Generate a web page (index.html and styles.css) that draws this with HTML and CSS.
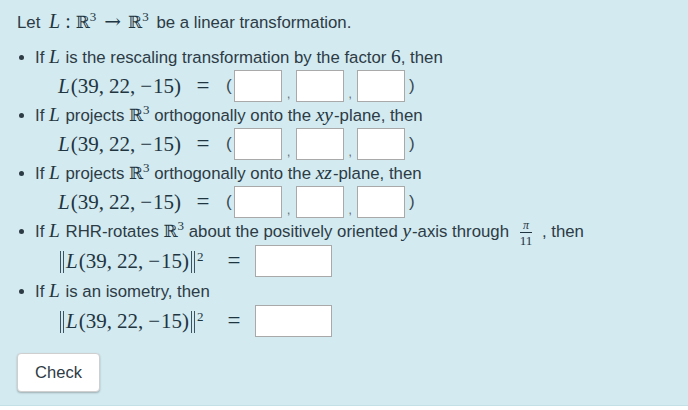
FILE: index.html
```html
<!DOCTYPE html>
<html>
<head>
<meta charset="utf-8">
<link rel="stylesheet" href="styles.css">
</head>
<body>
<div class="panel">
  <p class="intro">Let <span class="m imath"><i>L</i><span class="colon">:</span><span class="bb">ℝ</span><sup>3</sup><span class="arrow">→</span><span class="bb">ℝ</span><sup>3</sup></span> be a linear transformation.</p>
  <ul class="items">
    <li class="item">
      <div class="txt">If <i class="m">L</i> is the rescaling transformation by the factor <span class="m">6</span>, then</div>
      <div class="mrow">
        <span class="m expr"><i>L</i>(39,<span class="sp"></span>22,<span class="sp"></span><span class="minus">−</span>15)</span>
        <span class="m eq">=</span>
        <span class="paren">(</span><span class="box"></span><span class="comma">,</span><span class="box"></span><span class="comma">,</span><span class="box"></span><span class="paren close">)</span>
      </div>
    </li>
    <li class="item">
      <div class="txt">If <i class="m">L</i> projects <span class="m"><span class="bb">ℝ</span><sup>3</sup></span> orthogonally onto the <i class="m">xy</i>-plane, then</div>
      <div class="mrow">
        <span class="m expr"><i>L</i>(39,<span class="sp"></span>22,<span class="sp"></span><span class="minus">−</span>15)</span>
        <span class="m eq">=</span>
        <span class="paren">(</span><span class="box"></span><span class="comma">,</span><span class="box"></span><span class="comma">,</span><span class="box"></span><span class="paren close">)</span>
      </div>
    </li>
    <li class="item">
      <div class="txt">If <i class="m">L</i> projects <span class="m"><span class="bb">ℝ</span><sup>3</sup></span> orthogonally onto the <i class="m">xz</i>-plane, then</div>
      <div class="mrow">
        <span class="m expr"><i>L</i>(39,<span class="sp"></span>22,<span class="sp"></span><span class="minus">−</span>15)</span>
        <span class="m eq">=</span>
        <span class="paren">(</span><span class="box"></span><span class="comma">,</span><span class="box"></span><span class="comma">,</span><span class="box"></span><span class="paren close">)</span>
      </div>
    </li>
    <li class="item">
      <div class="txt">If <i class="m">L</i> RHR-rotates <span class="m"><span class="bb">ℝ</span><sup>3</sup></span> about the positively oriented <i class="m">y</i>-axis through <span class="frac"><span class="num">π</span><span class="den">11</span></span> , then</div>
      <div class="mrow nrow">
        <span class="m expr nexpr"><span class="norm"></span><i>L</i>(39,<span class="sp"></span>22,<span class="sp"></span><span class="minus">−</span>15)<span class="norm"></span><sup>2</sup></span>
        <span class="m eq neq">=</span>
        <span class="box wide"></span>
      </div>
    </li>
    <li class="item">
      <div class="txt">If <i class="m">L</i> is an isometry, then</div>
      <div class="mrow nrow">
        <span class="m expr nexpr"><span class="norm"></span><i>L</i>(39,<span class="sp"></span>22,<span class="sp"></span><span class="minus">−</span>15)<span class="norm"></span><sup>2</sup></span>
        <span class="m eq neq">=</span>
        <span class="box wide"></span>
      </div>
    </li>
  </ul>
  <button class="check">Check</button>
</div>
</body>
</html>
```

FILE: styles.css
```css
html, body {
  margin: 0;
  padding: 0;
  background: #ffffff;
}
body {
  font-family: "Liberation Sans", Arial, sans-serif;
  font-size: 16.8px;
  color: #2d3b45;
}
.panel {
  background: #d2eaf0;
  border-bottom: 1px solid #c2e0e6;
  padding: 7px 17px 13px;
  height: 385px;
}
.intro {
  margin: 0;
  height: 28px;
  line-height: 28px;
  white-space: nowrap;
}
.m {
  font-family: "Liberation Serif", "DejaVu Serif", serif;
  font-size: 20px;
  color: #1f3540;
}
.txt .m {
  font-size: 19.5px;
}
.expr {
  font-size: 21px;
}
.m i, i.m {
  font-style: italic;
  padding-right: 1px;
}
.imath {
  margin: 0 3px 0 4px;
}
.bb {
  font-family: "DejaVu Serif", serif;
  font-size: 17px;
}
.colon {
  margin: 0 5px 0 4px;
}
.arrow {
  font-family: "DejaVu Serif", serif;
  font-size: 20px;
  margin: 0 7px 0 8px;
}
sup {
  font-size: 13px;
  vertical-align: 7px;
  line-height: 0;
}
.items {
  list-style: none;
  margin: 9px 0 0;
  padding: 0;
}
.txt {
  height: 26px;
  line-height: 26px;
  padding-left: 18px;
  white-space: nowrap;
}
.txt::before {
  content: "";
  display: inline-block;
  width: 5px;
  height: 5px;
  border-radius: 50%;
  background: #2d3b45;
  margin-left: -16px;
  margin-right: 11px;
  vertical-align: 3px;
}
.mrow {
  display: flex;
  align-items: center;
  height: 32px;
  padding-left: 41px;
}
.nrow {
  height: 34px;
}
.expr {
  white-space: nowrap;
  width: 125px;
  flex: none;
}
.nexpr {
  width: 149px;
}
.sp {
  display: inline-block;
  width: 5px;
}
.minus {
  padding-right: 1px;
}
.norm {
  display: inline-block;
  box-sizing: border-box;
  width: 4px;
  height: 22px;
  border-left: 1px solid #3a5561;
  border-right: 1px solid #3a5561;
  vertical-align: -5px;
  margin: 0 2px;
}
.eq {
  width: 14px;
  font-size: 23px;
  text-align: center;
  margin-left: 13px;
  margin-right: 16px;
  flex: none;
}
.neq {
  margin-left: 20px;
  margin-right: 14px;
}
.paren {
  display: inline-block;
  width: 8px;
  font-size: 17px;
  color: #3a4850;
  flex: none;
}
.paren.close {
  margin-left: 4px;
}
.box {
  display: inline-block;
  box-sizing: border-box;
  width: 48px;
  height: 32px;
  background: #ffffff;
  border: 1px solid #a9a9a9;
  flex: none;
}
.box.wide {
  width: 77px;
}
.comma {
  font-size: 12px;
  color: #666;
  width: 13.5px;
  text-align: center;
  align-self: flex-end;
  line-height: 16px;
  flex: none;
}
.frac {
  display: inline-flex;
  flex-direction: column;
  align-items: center;
  vertical-align: middle;
  font-family: "Liberation Serif", serif;
  font-size: 13px;
  line-height: 11px;
  color: #1f3540;
  margin: 0 5px 0 6px;
}
.num {
  font-style: italic;
  font-size: 12px;
  border-bottom: 1px solid #1f3540;
  padding: 0 3px 1px;
}
.den {
  padding-top: 2px;
}
.check {
  display: block;
  margin-top: 15px;
  width: 83px;
  height: 39px;
  background: #ffffff;
  border: 1px solid #cfcfcf;
  border-radius: 4px;
  box-shadow: 0 1px 2px rgba(0, 0, 0, 0.25);
  font-family: "Liberation Sans", Arial, sans-serif;
  font-size: 16.5px;
  color: #2d3b45;
  padding: 0;
}
```
